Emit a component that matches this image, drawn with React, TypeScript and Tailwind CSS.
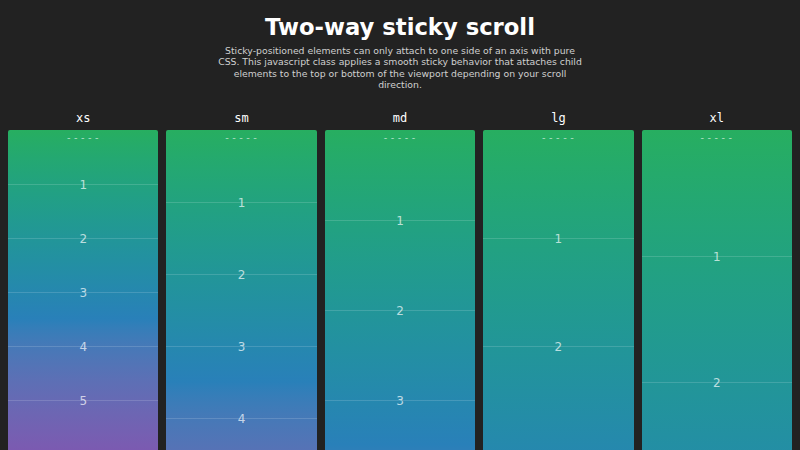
import React from "react";

const columns = [
  { name: "xs", row: 54 },
  { name: "sm", row: 72 },
  { name: "md", row: 90 },
  { name: "lg", row: 108 },
  { name: "xl", row: 126 },
];

// gradient runs over seven rows; labels only go as far as the viewport
const ROWS = 7;
const VISIBLE = 320;

function Column({ name, row }: { name: string; row: number }) {
  return (
    <div className="flex min-w-0 flex-col">
      <div className="h-[24px] text-center font-['DejaVu_Sans_Mono',monospace] text-[12px] leading-[24px] text-white">
        {name}
      </div>
      <div className="flex flex-col rounded-t-[2px] bg-gradient-to-b from-[#27ae60] via-[#2980b9] to-[#8e44ad]">
        {Array.from({ length: ROWS }).map((_, i) => (
          <div
            key={i}
            className={
              i === 0
                ? "flex shrink-0 justify-center"
                : "flex shrink-0 justify-center border-t border-white/15"
            }
            style={{ height: row }}
          >
            {i === 0 ? (
              <span className="mt-[2px] font-['DejaVu_Sans_Mono',monospace] text-[10px] leading-[12px] tracking-[1px] text-white/60">
                -----
              </span>
            ) : i * row < VISIBLE ? (
              <span className="-mt-[7px] font-['DejaVu_Sans',sans-serif] text-[12px] leading-[14px] text-white/70">
                {i}
              </span>
            ) : null}
          </div>
        ))}
      </div>
    </div>
  );
}

export default function App() {
  return (
    <div className="h-[450px] overflow-hidden bg-[#222222] font-['DejaVu_Sans',sans-serif]">
      <div className="flex flex-col items-center pt-[13px]">
        <h1 className="text-[22.7px] font-bold leading-[28px] text-white">
          Two-way sticky scroll
        </h1>
        <p className="mt-[4px] w-[371px] text-center text-[9.3px] leading-[11.4px] text-[#d0d0d0]">
          Sticky-positioned elements can only attach to one side of an axis with
          pure CSS. This javascript class applies a smooth sticky behavior that
          attaches child elements to the top or bottom of the viewport depending
          on your scroll direction.
        </p>
      </div>
      <div className="mt-[15px] grid grid-cols-5 gap-[8px] px-[8px]">
        {columns.map((c) => (
          <Column key={c.name} name={c.name} row={c.row} />
        ))}
      </div>
    </div>
  );
}
